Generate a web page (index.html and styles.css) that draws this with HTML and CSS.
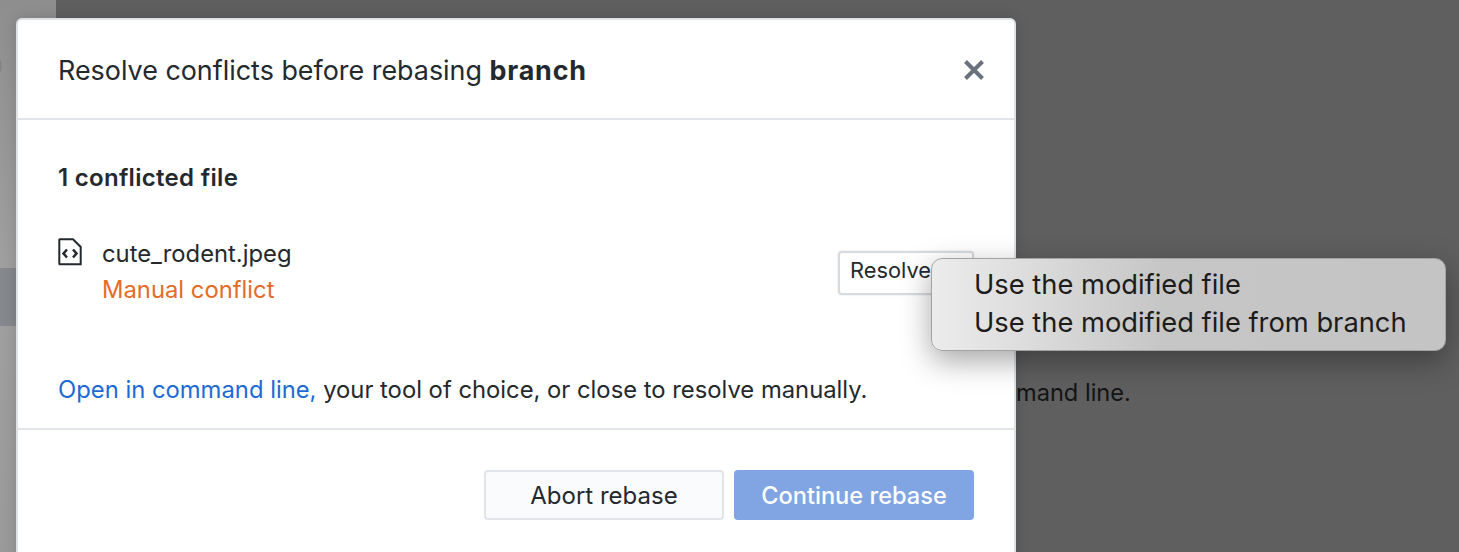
FILE: index.html
```html
<!DOCTYPE html>
<html lang="en">
<head>
    <meta charset="UTF-8">
    <title>Resolve conflicts</title>
    <link rel="stylesheet" href="styles.css">
</head>
<body>

    <div class="sidebar">
        <div class="sidebar-dot"></div>
        <div class="sidebar-row"></div>
    </div>

    <p class="behind-text">mand line.</p>

    <div class="dialog">
        <div class="dialog-header">
            <h1>Resolve conflicts before rebasing <strong>branch</strong></h1>
            <svg class="close-icon" width="24" height="24" viewBox="0 0 24 24">
                <path d="M3.5 3.5l17 17M20.5 3.5l-17 17"/>
            </svg>
        </div>

        <div class="dialog-body">
            <h2>1 conflicted file</h2>
            <div class="file-row">
                <svg class="file-icon" width="24" height="28" viewBox="0 0 24 28">
                    <path class="file-outline" d="M1.800 1.300h13.200l7.700 7.700v17.200H1.800a.5 .5 0 0 1-.5-.5V1.800a.5 .5 0 0 1 .5-.5z"/>
                    <path class="file-code" d="M9 11.500l-3.500 4 3.500 4M15 11.500l3.500 4-3.500 4"/>
                </svg>
                <div class="file-info">
                    <div class="file-name">cute_rodent.jpeg</div>
                    <div class="file-status">Manual conflict</div>
                </div>
                <button class="resolve-btn">Resolve</button>
            </div>
            <p class="hint"><a href="#">Open in command line,</a> your tool of choice, or close to resolve manually.</p>
        </div>

        <div class="dialog-footer">
            <button class="btn btn-abort">Abort rebase</button>
            <button class="btn btn-continue">Continue rebase</button>
        </div>
    </div>

    <ul class="context-menu">
        <li>Use the modified file</li>
        <li>Use the modified file from branch</li>
    </ul>

</body>
</html>
```

FILE: styles.css
```css
html, body {
    height: 100%;
}
body {
    margin: 0;
    overflow: hidden;
    position: relative;
    background-color: #5f5f5f;
    font-family: Inter, "Liberation Sans", sans-serif;
    color: #24292e;
}
.sidebar {
    position: absolute;
    left: 0;
    top: 0;
    bottom: 0;
    width: 56px;
    background: linear-gradient(#8e8e8e, #a0a0a0 50%, #9a9a9a);
}
.sidebar-dot {
    position: absolute;
    left: -8px;
    top: 58px;
    width: 10px;
    height: 16px;
    border-radius: 50%;
    background-color: #858585;
}
.sidebar-row {
    position: absolute;
    left: 0;
    right: 0;
    top: 268px;
    height: 58px;
    background-color: #85888c;
}
.behind-text {
    position: absolute;
    left: 1016px;
    top: 379px;
    margin: 0;
    font-size: 23.6px;
    line-height: 28px;
    color: #141414;
}
.dialog {
    position: absolute;
    left: 16px;
    top: 18px;
    width: 1000px;
    height: 560px;
    box-sizing: border-box;
    background-color: #fff;
    border: 2px solid #dfe2e5;
    border-radius: 6px;
    box-shadow: 0 0 14px rgba(0, 0, 0, 0.15);
    display: flex;
    flex-direction: column;
}
.dialog-header {
    height: 98px;
    flex: none;
    padding: 0 28px 0 40px;
    border-bottom: 2px solid #e1e4e8;
    display: flex;
    align-items: center;
    justify-content: space-between;
}
h1 {
    margin: 2px 0 0;
    font-size: 26.9px;
    font-weight: 400;
}
h1 strong {
    font-weight: 700;
    letter-spacing: 0.8px;
}
.close-icon {
    margin-top: 1px;
    fill: none;
    stroke: #6a737d;
    stroke-width: 4;
}
.dialog-body {
    height: 308px;
    flex: none;
    padding: 0 40px;
    border-bottom: 2px solid #e1e4e8;
    display: flex;
    flex-direction: column;
}
h2 {
    margin: 44px 0 0;
    font-size: 24px;
    line-height: 28px;
    font-weight: 600;
    letter-spacing: 0.3px;
}
.file-row {
    margin-top: 44px;
    display: flex;
    align-items: flex-start;
}
.file-icon {
    flex: none;
    margin: 2px 20px 0 0;
}
.file-outline {
    fill: none;
    stroke: #24292e;
    stroke-width: 2;
}
.file-code {
    fill: none;
    stroke: #24292e;
    stroke-width: 2.5;
}
.file-info {
    flex: 1;
    font-size: 23.8px;
    line-height: 36px;
}
.file-status {
    color: #e36c29;
}
.resolve-btn {
    width: 136px;
    height: 44px;
    margin: 15px 0 0;
    box-sizing: border-box;
    padding: 0 0 6px 10px;
    text-align: left;
    font: inherit;
    font-size: 21.8px;
    color: #24292e;
    background-color: #fff;
    border: 2px solid #d8dbde;
    border-radius: 4px;
    box-shadow: 0 0 2px rgba(0, 0, 0, 0.15);
}
.hint {
    margin: 68px 0 0;
    font-size: 23.8px;
    line-height: 28px;
}
.hint a {
    color: #1e6ad4;
    text-decoration: none;
}
.dialog-footer {
    flex: 1;
    padding: 40px;
    display: flex;
    justify-content: flex-end;
    align-items: flex-start;
    gap: 10px;
}
.btn {
    width: 240px;
    height: 50px;
    box-sizing: border-box;
    font: inherit;
    font-size: 24px;
    font-weight: 400;
    border-radius: 4px;
}
.btn-abort {
    color: #24292e;
    background-color: #fafbfc;
    border: 2px solid #e1e4e8;
}
.btn-continue {
    color: #fff;
    background-color: #80a5e2;
    border: none;
    font-weight: 500;
    font-size: 23.6px;
}
.context-menu {
    position: absolute;
    left: 931px;
    top: 258px;
    width: 515px;
    height: 93px;
    margin: 0;
    box-sizing: border-box;
    padding: 7px 0 0 42px;
    list-style: none;
    background: linear-gradient(90deg, #ececec, #c6c6c6 45%, #c4c4c4);
    border: 1px solid #a3a3a3;
    border-radius: 11px;
    box-shadow: 0 10px 30px rgba(0, 0, 0, 0.35);
    font-size: 27.3px;
    line-height: 38px;
    color: #1c1c1c;
}
```
